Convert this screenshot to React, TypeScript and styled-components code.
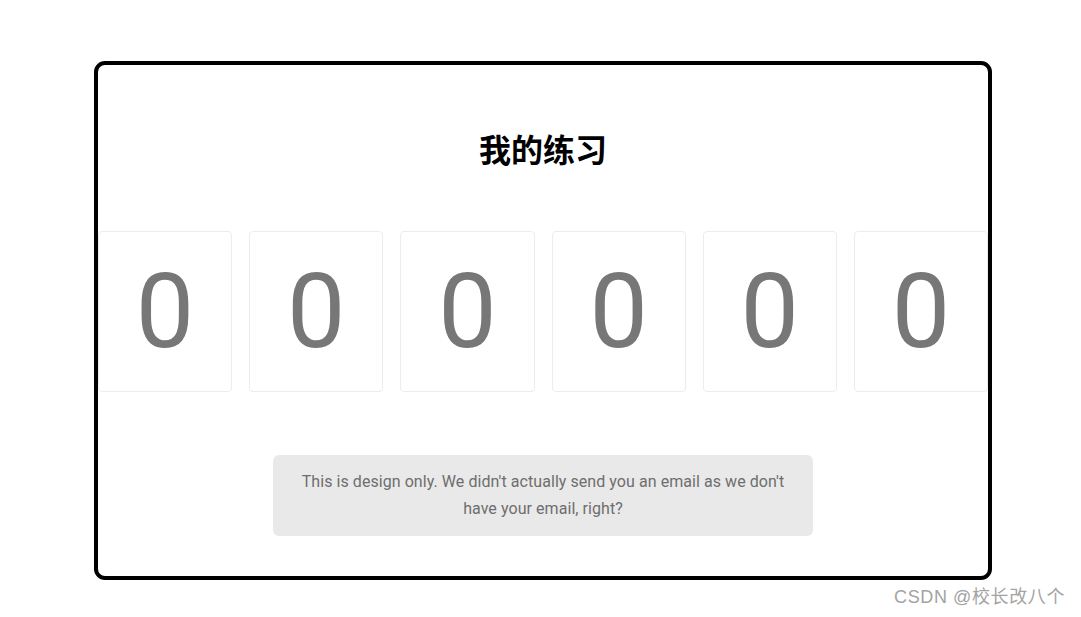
import styled, { createGlobalStyle } from 'styled-components';

const GlobalStyle = createGlobalStyle`
  html, body {
    margin: 0;
    padding: 0;
    background: #ffffff;
  }
  body {
    font-family: Roboto, "Noto Sans CJK SC", sans-serif;
  }
`;

const digits = ['0', '0', '0', '0', '0', '0'];

const App = () => {
  return (
    <Page>
      <GlobalStyle />
      <Card>
        <Title>我的练习</Title>
        <DigitRow>
          {digits.map((d, i) => (
            <DigitBox key={i}>{d}</DigitBox>
          ))}
        </DigitRow>
        <Note>
          This is design only. We didn't actually send you an email as we don't
          have your email, right?
        </Note>
      </Card>
      <Watermark>CSDN @校长改八个</Watermark>
    </Page>
  );
};

export default App;

const Page = styled.div`
  position: relative;
  width: 1081px;
  height: 617px;
  padding: 61px 0 0 94px;
  box-sizing: border-box;
  overflow: hidden;
`;

const Card = styled.div`
  // Element Attributes
  width: 898px;
  height: 519px;
  box-sizing: border-box;
  border: 4px solid #000;
  border-radius: 11px;
  background: #fff;
  overflow: hidden;

  // Content Behaviour
  display: flex;
  flex-direction: column;
  align-items: center;
`;

const Title = styled.h1`
  margin: 60px 0 0;
  font-family: "Noto Sans CJK SC", sans-serif;
  font-size: 32px;
  font-weight: 700;
  line-height: 46px;
  color: #000;
`;

const DigitRow = styled.div`
  width: 100%;
  margin-top: 60px;
  display: flex;
  gap: 17px;
`;

const DigitBox = styled.div`
  flex: 1;
  height: 161px;
  box-sizing: border-box;
  border: 1px solid #ececec;
  border-radius: 4px;
  background: #fff;

  display: flex;
  align-items: center;
  justify-content: center;

  font-family: Roboto, sans-serif;
  font-size: 104px;
  font-weight: 400;
  color: #777777;
`;

const Note = styled.p`
  width: 540px;
  box-sizing: border-box;
  margin: 63px 0 0;
  padding: 13px 27px 14px;
  background: #e9e9e9;
  border-radius: 6px;
  text-align: center;
  font-family: Roboto, sans-serif;
  font-size: 16px;
  letter-spacing: 0.06px;
  line-height: 27px;
  color: #6e6e6e;
`;

const Watermark = styled.span`
  position: absolute;
  right: 16px;
  top: 585px;
  font-family: "Liberation Sans", "Noto Sans CJK SC", sans-serif;
  font-size: 18px;
  letter-spacing: 0.6px;
  line-height: 24px;
  color: #a3a3a3;
`;
